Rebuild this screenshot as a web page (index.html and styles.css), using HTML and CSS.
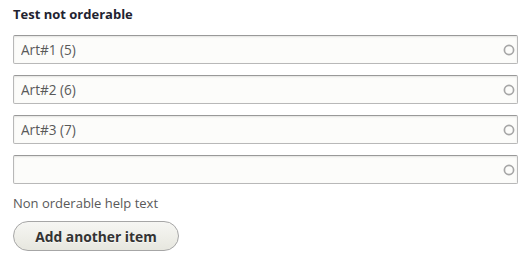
FILE: index.html
```html
<!DOCTYPE html>
<html>
<head>
<meta charset="utf-8">
<link rel="stylesheet" href="styles.css">
</head>
<body>
<div class="field">
  <div class="field-label">Test not orderable</div>
  <div class="items">
    <div class="item">
      <input class="form-text" type="text" value="Art#1 (5)">
      <svg class="throbber" width="14" height="14" viewBox="0 0 14 14"><circle cx="7" cy="7" r="4.6" fill="none" stroke="#a6a6a6" stroke-width="1.7"/></svg>
    </div>
    <div class="item">
      <input class="form-text" type="text" value="Art#2 (6)">
      <svg class="throbber" width="14" height="14" viewBox="0 0 14 14"><circle cx="7" cy="7" r="4.6" fill="none" stroke="#a6a6a6" stroke-width="1.7"/></svg>
    </div>
    <div class="item">
      <input class="form-text" type="text" value="Art#3 (7)">
      <svg class="throbber" width="14" height="14" viewBox="0 0 14 14"><circle cx="7" cy="7" r="4.6" fill="none" stroke="#a6a6a6" stroke-width="1.7"/></svg>
    </div>
    <div class="item">
      <input class="form-text" type="text" value="">
      <svg class="throbber" width="14" height="14" viewBox="0 0 14 14"><circle cx="7" cy="7" r="4.6" fill="none" stroke="#a6a6a6" stroke-width="1.7"/></svg>
    </div>
  </div>
  <div class="description">Non orderable help text</div>
  <button class="button" type="button">Add another item</button>
</div>
</body>
</html>
```
FILE: styles.css
```css
html, body {
  margin: 0;
  padding: 0;
  background: #ffffff;
}
body {
  font-family: "Open Sans", "DejaVu Sans", sans-serif;
  font-size: 13px;
  color: #222330;
}
.field {
  padding: 5px 12px 0 13px;
}
.field-label {
  font-weight: 700;
  font-size: 13px;
  line-height: 18px;
  margin-bottom: 12px;
  color: #222330;
}
.items {
  display: flex;
  flex-direction: column;
  gap: 11px;
}
.item {
  position: relative;
}
.form-text {
  display: block;
  box-sizing: border-box;
  width: 100%;
  height: 29px;
  margin: 0;
  padding: 0 7px;
  border: 1px solid #b8b8b8;
  border-top-color: #999999;
  border-radius: 2px;
  background: #fcfcfa;
  box-shadow: inset 0 1px 2px rgba(0, 0, 0, 0.1);
  font-family: "Open Sans", "DejaVu Sans", sans-serif;
  font-size: 13.6px;
  color: #595959;
  outline: none;
}
.throbber {
  position: absolute;
  right: 2px;
  top: 50%;
  margin-top: -7px;
}
.description {
  margin-top: 10px;
  line-height: 18px;
  font-size: 13px;
  color: #595959;
}
.button {
  display: block;
  box-sizing: border-box;
  margin-top: 9px;
  height: 30px;
  width: 166px;
  padding: 0;
  border: 1px solid #a6a6a6;
  border-radius: 20px;
  background: linear-gradient(to bottom, #f6f6f3, #e7e7df);
  font-family: "Open Sans", "DejaVu Sans", sans-serif;
  font-size: 13.8px;
  font-weight: 700;
  color: #333333;
  text-shadow: 0 1px rgba(255, 255, 255, 0.6);
}
```
